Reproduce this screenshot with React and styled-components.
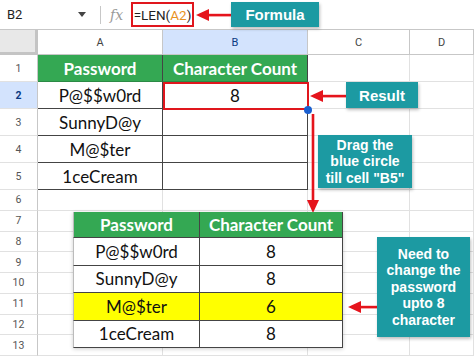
import styled, { createGlobalStyle } from "styled-components";

const GlobalStyle = createGlobalStyle`
  body {
    margin: 0;
    background: #fff;
    overflow: hidden;
  }
`;

const Page = styled.div`
  position: relative;
  width: 474px;
  height: 356px;
  overflow: hidden;
  background: #fff;
  font-family: Roboto, "Liberation Sans", sans-serif;
`;

const FormulaBar = styled.div`
  display: flex;
  align-items: center;
  height: 30px;
  box-sizing: border-box;
  border-bottom: 1px solid #c7c7c7;
`;

const NameBox = styled.div`
  display: flex;
  align-items: center;
  justify-content: space-between;
  width: 92px;
  padding: 0 6px 0 7px;
  box-sizing: border-box;
  font-size: 13px;
  color: #1f1f1f;
`;

const Caret = styled.span`
  width: 0;
  height: 0;
  border-left: 4px solid transparent;
  border-right: 4px solid transparent;
  border-top: 5px solid #444;
`;

const Divider = styled.span`
  width: 1px;
  height: 18px;
  background: #c7c7c7;
  margin: 0 9px 0 8px;
`;

const Fx = styled.span`
  font-family: "DejaVu Serif", serif;
  font-style: italic;
  font-size: 14px;
  color: #9a9a9a;
  width: 20px;
`;

const FormulaBox = styled.div`
  margin-left: 1px;
  width: 63px;
  height: 25px;
  display: flex;
  align-items: center;
  justify-content: center;
  box-sizing: border-box;
  border: 2px solid #e0161d;
  font-size: 13.5px;
  color: #1f1f1f;
`;

const Ref = styled.span`
  color: #e8931f;
`;

const Sheet = styled.div`
  display: grid;
  grid-template-columns: 38px 125px 145px 102px 1fr;
  grid-template-rows: 25px repeat(5, 27px) repeat(8, 20.75px);
`;

const Corner = styled.div`
  background: #e8e8e8;
  border-right: 3px solid #c4c4c4;
  border-bottom: 3px solid #c4c4c4;
`;

const ColHead = styled.div`
  display: flex;
  align-items: center;
  justify-content: center;
  font-size: 11px;
  color: ${(p) => (p.$active ? "#0b3a82" : "#444")};
  background: ${(p) => (p.$active ? "#d3e3fd" : "#fff")};
  border-right: 1px solid #c7c7c7;
  border-bottom: 1px solid #c7c7c7;
`;

const RowHead = styled.div`
  display: flex;
  align-items: center;
  justify-content: center;
  font-size: 10.5px;
  font-weight: ${(p) => (p.$active ? 700 : 400)};
  color: ${(p) => (p.$active ? "#0b3a82" : "#555")};
  background: ${(p) => (p.$active ? "#d3e3fd" : "#fff")};
  border-right: 1px solid #c7c7c7;
  border-bottom: 1px solid #e1e1e1;
`;

const Cell = styled.div`
  display: flex;
  align-items: center;
  justify-content: center;
  font-family: Lato, "Liberation Sans", sans-serif;
  font-size: 17px;
  color: #111;
  box-sizing: border-box;
  border-right: 1px solid #e1e1e1;
  border-bottom: 1px solid #e1e1e1;
  ${(p) => p.$boxed && "border-right: 1px solid #444; border-bottom: 1px solid #444;"}
  ${(p) =>
    p.$head &&
    "background: #34a853; color: #fff; font-weight: 700; border-bottom: 1px solid #2b8a45;"}
`;

const Selection = styled.div`
  position: absolute;
  left: 163px;
  top: 82px;
  width: 146px;
  height: 28px;
  box-sizing: border-box;
  border: 2px solid #e0161d;
`;

const Handle = styled.div`
  position: absolute;
  left: 304px;
  top: 106px;
  width: 8px;
  height: 8px;
  border-radius: 50%;
  background: #1a5fd0;
`;

const Callout = styled.div`
  position: absolute;
  left: ${(p) => p.$x}px;
  top: ${(p) => p.$y}px;
  width: ${(p) => p.$w}px;
  height: ${(p) => p.$h}px;
  display: flex;
  align-items: center;
  justify-content: center;
  text-align: center;
  background: #1c9aa2;
  color: #fff;
  font-family: "Liberation Sans", Arial, sans-serif;
  font-weight: 700;
  font-size: ${(p) => p.$size || 15}px;
  line-height: ${(p) => p.$lh || 17}px;
  box-shadow: 1px 2px 3px rgba(0, 0, 0, 0.25);
`;

const Arrow = styled.svg`
  position: absolute;
  left: ${(p) => p.$x}px;
  top: ${(p) => p.$y}px;
  overflow: visible;
`;

const Pasted = styled.div`
  position: absolute;
  left: 73px;
  top: 212px;
  width: 270px;
  display: grid;
  grid-template-columns: 126px 144px;
  grid-template-rows: 26px repeat(4, 27.5px);
  background: #fff;
  box-shadow: 0 1px 4px rgba(0, 0, 0, 0.2);
`;

const PCell = styled.div`
  display: flex;
  align-items: center;
  justify-content: center;
  font-family: Lato, "Liberation Sans", sans-serif;
  font-size: 17px;
  color: #111;
  box-sizing: border-box;
  border-bottom: 1px solid #444;
  border-left: ${(p) => (p.$first ? "1px solid #bbb" : "1px solid #444")};
  border-right: ${(p) => (p.$first ? "none" : "1px solid #444")};
  background: ${(p) => (p.$head ? "#34a853" : p.$hl ? "#ffff00" : "#fff")};
  ${(p) => p.$head && "color: #fff; font-weight: 700;"}
`;

function LeftArrow({ x, y, len }) {
  return (
    <Arrow $x={x} $y={y - 7} width={len} height={14}>
      <polygon points={`0,7 13,1 13,13`} fill="#e5141c" />
      <rect x="12" y="5.8" width={len - 12} height="2.6" fill="#e5141c" />
    </Arrow>
  );
}

const cols = ["A", "B", "C", "D"];
const topRows = [
  ["Password", "Character Count"],
  ["P@$$w0rd", "8"],
  ["SunnyD@y", ""],
  ["M@$ter", ""],
  ["1ceCream", ""],
];
const pasted = [
  ["P@$$w0rd", "8"],
  ["SunnyD@y", "8"],
  ["M@$ter", "6"],
  ["1ceCream", "8"],
];

export default function App() {
  const rows = [];
  for (let r = 1; r <= 13; r++) {
    const data = topRows[r - 1];
    rows.push(
      <RowHead key={`h${r}`} $active={r === 2}>
        {r}
      </RowHead>
    );
    rows.push(
      <Cell key={`a${r}`} $boxed={!!data} $head={r === 1}>
        {data ? data[0] : ""}
      </Cell>
    );
    rows.push(
      <Cell key={`b${r}`} $boxed={!!data} $head={r === 1}>
        {data ? data[1] : ""}
      </Cell>
    );
    rows.push(<Cell key={`c${r}`} />);
    rows.push(<Cell key={`d${r}`} />);
  }

  return (
    <Page>
      <GlobalStyle />
      <FormulaBar>
        <NameBox>
          B2 <Caret />
        </NameBox>
        <Divider />
        <Fx>fx</Fx>
        <FormulaBox>
          =LEN(<Ref>A2</Ref>)
        </FormulaBox>
      </FormulaBar>

      <Sheet>
        <Corner />
        {cols.map((c) => (
          <ColHead key={c} $active={c === "B"}>
            {c}
          </ColHead>
        ))}
        {rows}
      </Sheet>

      <Selection />
      <Handle />

      <LeftArrow x={196} y={15} len={36} />
      <Callout $x={231} $y={2} $w={88} $h={25}>
        Formula
      </Callout>

      <LeftArrow x={310} y={96} len={37} />
      <Callout $x={346} $y={82} $w={72} $h={26}>
        Result
      </Callout>

      <Arrow $x={306} $y={114} width={14} height={100}>
        <rect x="5.7" y="0" width="2.6" height="88" fill="#e5141c" />
        <polygon points="1,86 13,86 7,99" fill="#e5141c" />
      </Arrow>
      <Callout $x={318} $y={135} $w={94} $h={53} $size={14} $lh={16.5}>
        Drag the
        <br />
        blue circle
        <br />
        till cell "B5"
      </Callout>

      <Pasted>
        <PCell $first $head>
          Password
        </PCell>
        <PCell $head>Character Count</PCell>
        {pasted.map(([a, b], i) => [
          <PCell key={`pa${i}`} $first $hl={i === 2}>
            {a}
          </PCell>,
          <PCell key={`pb${i}`} $hl={i === 2}>
            {b}
          </PCell>,
        ])}
      </Pasted>

      <LeftArrow x={348} y={307} len={30} />
      <Callout $x={377} $y={237} $w={93} $h={100} $size={14} $lh={16.5}>
        Need to
        <br />
        change the
        <br />
        password
        <br />
        upto 8
        <br />
        character
      </Callout>
    </Page>
  );
}
